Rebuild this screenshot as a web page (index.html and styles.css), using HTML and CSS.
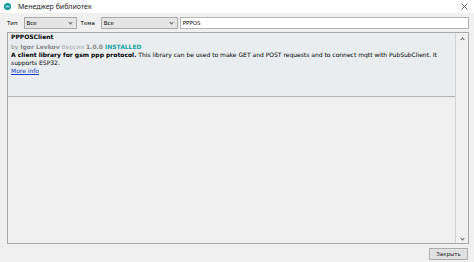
FILE: index.html
```html
<!DOCTYPE html>
<html lang="ru">
<head>
  <meta charset="UTF-8" />
  <title>Менеджер библиотек</title>
  <link rel="stylesheet" href="styles.css">
</head>
<body>
  <div class="window">
    <header class="titlebar">
      <span class="app-icon">
        <svg width="7" height="7" viewBox="0 0 14 14">
          <circle cx="7" cy="7" r="7" fill="#00979c"/>
          <path d="M3.5 7c0-1.2 1-1.8 1.8-1.8C6.6 5.2 7.4 7 7 7s.4-1.8 1.7-1.8c.8 0 1.8.6 1.8 1.8s-1 1.8-1.8 1.8C7.4 8.8 7 7 7 7s-.4 1.8-1.7 1.8c-.8 0-1.8-.6-1.8-1.8z" fill="none" stroke="#fff" stroke-width="1.2"/>
        </svg>
      </span>
      <span class="title">Менеджер библиотек</span>
      <span class="close">
        <svg width="7" height="7" viewBox="0 0 7 7"><path d="M0.5 0.5l6 6M6.5 0.5l-6 6" stroke="#444" stroke-width="0.8"/></svg>
      </span>
    </header>

    <div class="toolbar">
      <label class="lbl">Тип</label>
      <div class="combo combo-type"><span>Все</span><i class="chev"></i></div>
      <label class="lbl">Тема</label>
      <div class="combo combo-topic"><span>Все</span><i class="chev"></i></div>
      <div class="search">PPPOS</div>
    </div>

    <div class="list">
      <div class="items">
        <div class="item">
          <div class="item-name">PPPOSClient</div>
          <div class="item-meta">
            by <b>Igor Levkov</b> <span class="ver">Версия</span> <b>1.0.0</b> <b class="installed">INSTALLED</b>
          </div>
          <p class="item-desc"><b>A client library for gsm ppp protocol.</b> This library can be used to make GET and POST requests and to connect mqtt with PubSubClient. It supports ESP32.</p>
          <a class="more" href="#">More info</a>
        </div>
      </div>
      <div class="scrollbar">
        <i class="arrow up"></i>
        <i class="arrow down"></i>
      </div>
    </div>

    <footer class="footer">
      <button class="btn">Закрыть</button>
    </footer>
  </div>
</body>
</html>
```

FILE: styles.css
```css
* {
  margin: 0; padding: 0; box-sizing: border-box;
}
body {
  background: #f0f0f0;
  font-family: "DejaVu Sans", sans-serif;
  color: #000;
}
.window {
  width: 474px;
  height: 262px;
  display: flex;
  flex-direction: column;
  background: #f0f0f0;
}
.titlebar {
  height: 13px;
  background: #fff;
  display: flex;
  align-items: center;
  padding: 0 6px 0 4px;
  font-family: "Noto Sans", sans-serif;
  font-size: 7px;
  color: #222;
}
.app-icon { display: flex; width: 7px; height: 7px; }
.title { margin-left: 7px; }
.close { margin-left: auto; display: flex; }

.toolbar {
  height: 18px;
  display: flex;
  align-items: center;
  padding: 3px 5px 1px 7px;
  font-size: 5.5px;
}
.lbl { margin-right: 6px; }
.combo {
  height: 12px;
  background: #e5e5e5;
  border: 1px solid #acacac;
  display: flex;
  align-items: center;
  padding: 0 4px 0 2px;
  margin-right: 4px;
}
.combo span { flex: 1; }
.combo-type { width: 53px; }
.combo-topic { width: 77px; margin-right: 2px; }
.chev {
  width: 3px; height: 3px;
  border-right: 1px solid #666;
  border-bottom: 1px solid #666;
  transform: rotate(45deg);
  margin-top: -2px;
}
.search {
  flex: 1;
  height: 12px;
  background: #fff;
  border: 1px solid #b4b4b4;
  display: flex;
  align-items: center;
  padding-left: 2px;
}

.list {
  margin: 1px 5px 0 7px;
  height: 212px;
  border: 1px solid #a8a8a8;
  display: flex;
}
.items {
  flex: 1;
  border-right: 1px solid #d4d4d4;
}
.item {
  height: 64px;
  background: #e9edef;
  border-bottom: 1px solid #b0b0b0;
  padding: 0 3px;
  font-size: 6px;
  line-height: 8px;
}
.item-name { font-weight: bold; margin-bottom: 2px; }
.item-meta { color: #888; }
.item-meta b { color: #888; }
.item-meta .ver { color: #aaa; }
.item-meta .installed { color: #17a1a5; }
.item-desc { padding-right: 12px; }
.more { color: #1a3ccb; text-decoration: underline; }
.scrollbar {
  width: 12px;
  display: flex;
  flex-direction: column;
  justify-content: space-between;
  align-items: center;
  padding: 5px 0 3px;
}
.arrow {
  width: 3px; height: 3px;
  border-left: 1px solid #606060;
  border-top: 1px solid #606060;
}
.arrow.up { transform: rotate(45deg); }
.arrow.down { transform: rotate(225deg); }

.footer {
  flex: 1;
  display: flex;
  justify-content: flex-end;
  align-items: flex-start;
  padding: 4px 6px 0 0;
}
.btn {
  width: 39px;
  height: 12px;
  background: #e1e1e1;
  border: 1px solid #adadad;
  font-family: "DejaVu Sans", sans-serif;
  font-size: 5.5px;
  color: #222;
}
```
